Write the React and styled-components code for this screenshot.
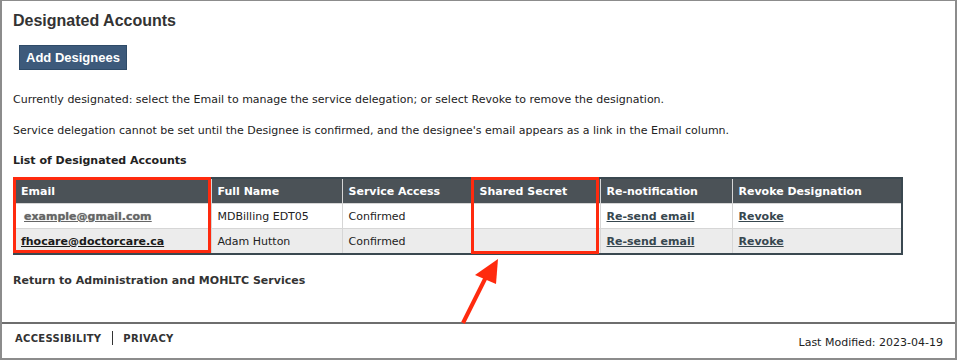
import React from 'react';
import styled, { createGlobalStyle } from 'styled-components';

const GlobalStyle = createGlobalStyle`
  html, body {
    margin: 0;
    padding: 0;
    background: #fff;
  }
  body {
    font-family: "DejaVu Sans", Verdana, sans-serif;
    color: #222;
  }
`;

const Frame = styled.div`
  box-sizing: border-box;
  width: 957px;
  height: 360px;
  border: 2px solid #8c8c8c;
  border-top-width: 1px;
  display: flex;
  flex-direction: column;
  position: relative;
  overflow: hidden;
`;

const Main = styled.div`
  padding: 11px 11px 0 11px;
`;

const Title = styled.h1`
  margin: 0;
  font-family: "Liberation Sans", Arial, sans-serif;
  font-size: 16px;
  font-weight: bold;
  color: #333;
  line-height: 18px;
`;

const Button = styled.button`
  margin: 15px 0 0 6px;
  height: 25px;
  width: 108px;
  padding: 0;
  border: 1px solid #2f4b68;
  background: #3d5a7b;
  color: #fff;
  font-family: "Liberation Sans", Arial, sans-serif;
  font-weight: bold;
  font-size: 13px;
  cursor: pointer;
`;

const Para = styled.p`
  margin: ${(p) => p.$top}px 0 0 0;
  font-size: 11px;
  line-height: 14px;
  color: #222;
`;

const Heading = styled.h2`
  margin: 16px 0 0 0;
  font-size: 11px;
  line-height: 14px;
  font-weight: bold;
  color: #222;
`;

const TableWrap = styled.div`
  position: relative;
  margin-top: 9px;
  width: 890px;
`;

const Table = styled.table`
  width: 890px;
  border-collapse: collapse;
  border: 2px solid #3a4850;
  font-size: 11px;
  table-layout: fixed;
`;

const Th = styled.th`
  background: #4b5257;
  color: #fff;
  text-align: left;
  font-weight: bold;
  height: 24px;
  padding: 0 6px;
  border-left: 1px solid #d6d6d6;
  &:first-child {
    border-left: none;
  }
`;

const Tr = styled.tr`
  background: ${(p) => (p.$alt ? '#ececec' : '#fff')};
`;

const Td = styled.td`
  height: 24px;
  padding: 0 6px;
  border-left: 1px solid #d6d6d6;
  border-top: 1px solid #d6d6d6;
  color: #222;
  &:first-child {
    border-left: none;
  }
`;

const CellLink = styled.a`
  font-weight: bold;
  color: ${(p) => (p.$faded ? '#666' : '#1a1a1a')};
  text-decoration: underline;
  padding-left: ${(p) => (p.$faded ? '3px' : '0')};
  text-shadow: ${(p) => (p.$faded ? '0 0 1px #999' : 'none')};
  cursor: pointer;
`;

const ActionLink = styled.a`
  font-weight: bold;
  color: #37474f;
  text-decoration: underline;
  cursor: pointer;
`;

const Callout = styled.div`
  position: absolute;
  box-sizing: border-box;
  top: 0;
  left: ${(p) => p.$left}px;
  width: ${(p) => p.$width}px;
  height: ${(p) => p.$height}px;
  border: 3px solid #ff2a0e;
  pointer-events: none;
`;

const Arrow = styled.svg`
  position: absolute;
  left: 450px;
  top: 250px;
  pointer-events: none;
`;

const ReturnLink = styled.a`
  display: block;
  margin-top: 19px;
  font-size: 11px;
  font-weight: bold;
  color: #333;
  text-decoration: none;
`;

const Footer = styled.footer`
  margin-top: auto;
  border-top: 2px solid #6e6e6e;
  height: 34px;
  display: flex;
  align-items: flex-start;
  justify-content: space-between;
  padding: 0 12px 0 13px;
`;

const FooterNav = styled.nav`
  display: flex;
  align-items: center;
  margin-top: 7px;
`;

const FooterLink = styled.a`
  font-size: 10px;
  font-weight: bold;
  color: #333;
  text-decoration: none;
  letter-spacing: 0.3px;
`;

const Divider = styled.span`
  width: 1px;
  height: 14px;
  background: #333;
  margin: 0 10px 0 11px;
`;

const Modified = styled.div`
  margin-top: 12px;
  font-size: 11px;
  color: #222;
`;

const rows = [
  { email: 'example@gmail.com', faded: true, name: 'MDBilling EDT05' },
  { email: 'fhocare@doctorcare.ca', faded: false, name: 'Adam Hutton' },
];

export default function App() {
  return (
    <>
      <GlobalStyle />
      <Frame>
        <Main>
          <Title>Designated Accounts</Title>
          <Button>Add Designees</Button>
          <Para $top={23}>
            Currently designated: select the Email to manage the service delegation; or select Revoke to remove the designation.
          </Para>
          <Para $top={17}>
            Service delegation cannot be set until the Designee is confirmed, and the designee's email appears as a link in the Email column.
          </Para>
          <Heading>List of Designated Accounts</Heading>
          <TableWrap>
            <Table>
              <colgroup>
                <col style={{ width: 197 }} />
                <col style={{ width: 131 }} />
                <col style={{ width: 131 }} />
                <col style={{ width: 127 }} />
                <col style={{ width: 132 }} />
                <col />
              </colgroup>
              <thead>
                <tr>
                  <Th>Email</Th>
                  <Th>Full Name</Th>
                  <Th>Service Access</Th>
                  <Th>Shared Secret</Th>
                  <Th>Re-notification</Th>
                  <Th>Revoke Designation</Th>
                </tr>
              </thead>
              <tbody>
                {rows.map((r, i) => (
                  <Tr key={r.email} $alt={i % 2 === 1}>
                    <Td>
                      <CellLink $faded={r.faded}>{r.email}</CellLink>
                    </Td>
                    <Td>{r.name}</Td>
                    <Td>Confirmed</Td>
                    <Td></Td>
                    <Td>
                      <ActionLink>Re-send email</ActionLink>
                    </Td>
                    <Td>
                      <ActionLink>Revoke</ActionLink>
                    </Td>
                  </Tr>
                ))}
              </tbody>
            </Table>
            <Callout $left={0} $width={198} $height={76} />
            <Callout $left={458} $width={128} $height={77} />
          </TableWrap>
          <ReturnLink>Return to Administration and MOHLTC Services</ReturnLink>
        </Main>
        <Footer>
          <FooterNav>
            <FooterLink>ACCESSIBILITY</FooterLink>
            <Divider />
            <FooterLink>PRIVACY</FooterLink>
          </FooterNav>
          <Modified>Last Modified: 2023-04-19</Modified>
        </Footer>
        <Arrow width="60" height="80" viewBox="0 0 60 80">
          <line x1="11" y1="72" x2="36" y2="22" stroke="#ff2a0e" strokeWidth="4" />
          <polygon points="46,8 23,24 44,33" fill="#ff2a0e" />
        </Arrow>
      </Frame>
    </>
  );
}
